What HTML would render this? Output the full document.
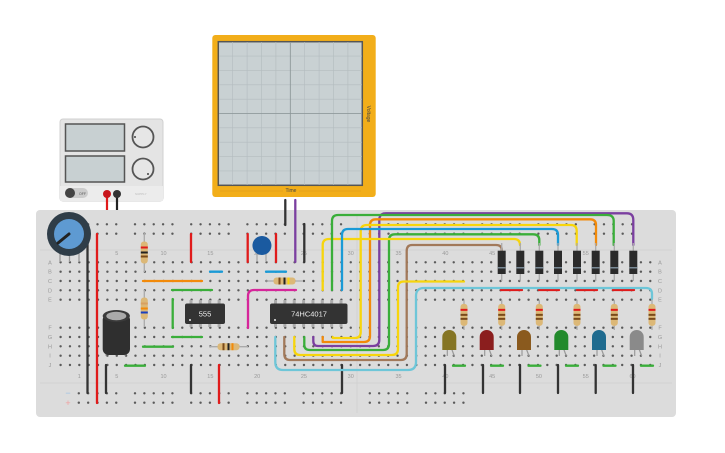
<!DOCTYPE html>
<html><head><meta charset="utf-8"><style>
html,body{margin:0;padding:0;background:#fff;width:725px;height:453px;overflow:hidden}
svg{display:block}
text{font-family:"Liberation Sans",sans-serif}
</style></head><body>
<svg id="s" width="725" height="453" viewBox="0 0 725 453" xmlns="http://www.w3.org/2000/svg">
<!-- power supply -->
<rect x="60" y="119" width="103" height="82" rx="3" fill="#e4e4e4" stroke="#d0d0d0"/>
<rect x="60" y="186" width="103" height="15" fill="#ececec"/>
<rect x="65.5" y="124" width="59" height="27" fill="#c8d0d2" stroke="#555" stroke-width="1.5"/>
<rect x="65.5" y="156" width="59" height="26" fill="#c8d0d2" stroke="#555" stroke-width="1.5"/>
<circle cx="143" cy="137" r="10.5" fill="#e6e6e6" stroke="#555" stroke-width="1.8"/>
<circle cx="143" cy="169" r="10.5" fill="#e6e6e6" stroke="#555" stroke-width="1.8"/>
<circle cx="135" cy="137" r="1" fill="#444"/><circle cx="148" cy="174" r="1" fill="#444"/>
<rect x="65" y="188" width="23" height="10" rx="5" fill="#ccc"/><circle cx="70" cy="193" r="5" fill="#444"/>
<text x="79" y="195" font-size="3.5" fill="#555">OFF</text>
<text x="135" y="195" font-size="3" fill="#bbb">SUPPLY</text>
<line x1="107" y1="194" x2="107" y2="234" stroke="#e01b1b" stroke-width="2.2"/>
<line x1="117" y1="194" x2="117" y2="225" stroke="#222" stroke-width="2.2"/>
<circle cx="107" cy="194" r="4" fill="#c8151b"/><circle cx="117" cy="194" r="4" fill="#333"/>
<!-- oscilloscope -->
<rect x="212.3" y="35" width="163.4" height="162" rx="3" fill="#f2ae1a"/>
<rect x="218.3" y="41.7" width="144" height="143.6" fill="#c9d1d3" stroke="#555" stroke-width="1.5"/>
<g id="grid" stroke="#b3bcbf" stroke-width="0.6"></g>
<line x1="290.3" y1="42" x2="290.3" y2="185" stroke="#8a9496" stroke-width="0.8"/>
<line x1="219" y1="113.5" x2="362" y2="113.5" stroke="#8a9496" stroke-width="0.8"/>
<text x="367" y="114" font-size="5" fill="#444" transform="rotate(90 367 114)" text-anchor="middle">Voltage</text>
<text x="291" y="192" font-size="5" fill="#444" text-anchor="middle">Time</text>
<line x1="220" y1="191" x2="283" y2="191" stroke="#d9961a" stroke-width="0.5"/><line x1="299" y1="191" x2="361" y2="191" stroke="#d9961a" stroke-width="0.5"/>
<!-- breadboard -->
<rect x="36" y="210" width="640" height="207" rx="4" fill="#dcdcdc"/>
<line x1="40" y1="250" x2="672" y2="250" stroke="#d2d2d2"/>
<line x1="40" y1="383" x2="672" y2="383" stroke="#d2d2d2"/>
<line x1="357" y1="214" x2="357" y2="413" stroke="#d2d2d2"/>
<g id="holes" fill="#5a5a5a"></g>
<g font-size="5.5" fill="#999" id="lbl"></g>
<text x="68" y="396" font-size="9" fill="#9bc3e6" text-anchor="middle">−</text>
<text x="68" y="406" font-size="9" fill="#f0a0a0" text-anchor="middle">+</text>
<!-- wires -->
<g fill="none" stroke-width="2.3" stroke-linejoin="round" stroke-linecap="round">
<path d="M87.5 240V393" stroke="#333"/>
<path d="M97 234V403" stroke="#e01b1b"/>
<path d="M191 234V262M247.7 234V262M276 234V262" stroke="#e01b1b"/>
<path d="M285.3 200V225" stroke="#333"/>
<path d="M295.3 200V262" stroke="#7b3fa0"/>
<path d="M304.3 224V262" stroke="#333"/>
<path d="M210 271.7H222M266 271.7H286" stroke="#1a9ad6"/>
<path d="M296 290H254Q248 290 248 296V328" stroke="#d6269a"/>
<path d="M143 281H202" stroke="#f28a0a"/>
<path d="M172 290H212M172.7 299V328M172 337H202M143 346.7H173M125 365.7H145" stroke="#3aae3a"/>
<path d="M106 365V393M191 365V393M342 365V393" stroke="#333"/>
<path d="M219 365V403" stroke="#e01b1b"/>
<path d="M445 365V393M483 365V393M520 365V393M558 365V393M595.7 365V393M633 365V393" stroke="#333"/>
<path d="M453 365.7H465M491 365.7H503M528.5 365.7H540.5M566 365.7H578M603.5 365.7H615.5M641 365.7H653" stroke="#3aae3a"/>
<path d="M501 290H522M539 290H559M577 290H597M613 290H634" stroke="#e01b1b"/>
<path d="M275.3 337V362Q275.3 370 283 370H408Q416 370 416 362V296Q416 288 424 288H646Q652 288 652 294V299" stroke="#6ec6d8"/>
<path d="M284.3 337V354Q284.3 360 290 360H401Q406.7 360 406.7 354V251Q406.7 245 412 245H496Q501.7 245 501.7 250V252" stroke="#a2795a"/>
<path d="M294.3 337V349Q294.3 355 300 355H392Q398 355 398 349V287Q398 281.5 404 281.5H464" stroke="#f7d50c"/>
<path d="M304.3 337V345Q304.3 350 310 350H383Q389 350 389 344V240Q389 234.3 395 234.3H533Q539.3 234.3 539.3 240V245" stroke="#3aae3a"/>
<path d="M313.3 337V341Q313.3 346 318 346H373Q379.3 346 379.3 340V220Q379.3 213.3 386 213.3H627Q633.3 213.3 633.3 220V245" stroke="#7b3fa0"/>
<path d="M322.7 337V342H364Q370 342 370 336V225Q370 219.3 376 219.3H590Q596 219.3 596 225V245" stroke="#f28a0a"/>
<path d="M332.7 337V338H355Q360.7 338 360.7 332V231Q360.7 225 367 225H571Q576.7 225 576.7 231V245" stroke="#f7d50c"/>
<path d="M322.7 290V245Q322.7 239 329 239H514Q520 239 520 245" stroke="#f7d50c"/>
<path d="M332 290V221Q332 215 338 215H607Q613.7 215 613.7 221V245" stroke="#3aae3a"/>
<path d="M342 290V235Q342 229 348 229H552Q558 229 558 235V245" stroke="#1a9ad6"/>
</g>
<!-- pot -->
<g stroke="#999" stroke-width="1.3"><line x1="60" y1="245" x2="60" y2="262"/><line x1="69.5" y1="245" x2="69.5" y2="262"/><line x1="79" y1="245" x2="79" y2="262"/></g>
<circle cx="69" cy="234" r="22" fill="#2f3d48"/>
<circle cx="69" cy="234" r="15" fill="#5e9ad2"/>
<line x1="69" y1="234" x2="58" y2="243" stroke="#222" stroke-width="3" stroke-linecap="round"/>
<!-- ceramic cap -->
<g stroke="#999" stroke-width="1"><line x1="257" y1="250" x2="257" y2="262"/><line x1="266" y1="250" x2="266" y2="262"/></g>
<path d="M262 236a9.5 9.5 0 1 1 -0.1 0Z" fill="#1a5aa0"/>
<!-- electrolytic -->
<g stroke="#999" stroke-width="1"><line x1="106" y1="350" x2="106" y2="356"/><line x1="125" y1="350" x2="125" y2="356"/></g>
<rect x="102.7" y="314" width="27.3" height="41" rx="6" fill="#2f2f2f"/>
<ellipse cx="116.3" cy="316" rx="13.6" ry="6" fill="#3a3a3a"/>
<ellipse cx="116.3" cy="316" rx="10" ry="4.3" fill="#aaa"/>
<g id="chips"></g>
<rect x="185" y="303.5" width="40" height="20.5" rx="2" fill="#333"/>
<text x="205" y="316.5" font-size="7.5" fill="#eee" text-anchor="middle" font-family="Liberation Mono">555</text>
<rect x="270" y="303.5" width="77.5" height="20.5" rx="2" fill="#333"/>
<text x="309" y="316.5" font-size="7.5" fill="#eee" text-anchor="middle" font-family="Liberation Mono">74HC4017</text>
<circle cx="190" cy="320" r="1" fill="#eee"/><circle cx="275" cy="320" r="1" fill="#eee"/>
<g id="parts"></g>
</svg>
<script>
var N="http://www.w3.org/2000/svg";
function el(t,a,p){var e=document.createElementNS(N,t);for(var k in a)e.setAttribute(k,a[k]);(p||document.getElementById('s')).appendChild(e);return e;}
var g=document.getElementById('grid');
for(var i=1;i<10;i++){var x=218.3+i*14.4,y=41.7+i*14.36;el('line',{x1:x,y1:42,x2:x,y2:185},g);el('line',{x1:219,y1:y,x2:362,y2:y},g);}
var h=document.getElementById('holes');
function hole(x,y){el('circle',{cx:x,cy:y,r:1.2},h);}
var rows=[262.3,271.7,281,290.3,299.7,327.7,337,346.3,355.7,365];
for(var c=0;c<64;c++){var x=60.6+c*9.36;rows.forEach(function(y){hole(x,y);});}
for(var k=0;k<10;k++)for(var j=0;j<5;j++){var x=78.8+k*56.2+j*9.36+(k>4?10:0);
 [224.3,233.7].forEach(function(y){hole(x,y);});
 if(k<7)[393.3,402.7].forEach(function(y){hole(x,y);});}
var L=document.getElementById('lbl');
function tx(x,y,s,a){var t=el('text',{x:x,y:y,'text-anchor':a||'middle'},L);t.textContent=s;}
"ABCDE".split("").forEach(function(s,i){tx(50,rows[i]+2,s);tx(660,rows[i]+2,s);});
"FGHIJ".split("").forEach(function(s,i){tx(50,rows[i+5]+2,s);tx(660,rows[i+5]+2,s);});
function cx(n){return 79.3+(n-1)*9.36+(n>30?1:0);}
[5,10,15,20,25,30,35,40,45,50,55,60].forEach(function(n){tx(cx(n),255,n);});
[1,5,10,15,20,25,30,35,40,45,50,55,60].forEach(function(n){tx(cx(n),378,n);});
var P=document.getElementById('parts');
var C=document.getElementById('chips');
function pins(x0,n,y){for(var i=0;i<n;i++)el('rect',{x:x0+i*9.36-1.5,y:y,width:3,height:4,fill:'#aaa'},C);}
pins(191,4,300);pins(191,4,323);pins(275.5,8,300);pins(275.5,8,323);
function resV(x,y1,y2,b1,b2,b3){el('line',{x1:x,y1:y1,x2:x,y2:y2,stroke:'#aaa','stroke-width':1.3},P);var m=(y1+y2)/2;
 el('rect',{x:x-3.5,y:m-11,width:7,height:22,rx:3,fill:'#dcb877'},P);
 el('rect',{x:x-3.5,y:m-6,width:7,height:2,fill:b1},P);el('rect',{x:x-3.5,y:m-1,width:7,height:2,fill:b2},P);el('rect',{x:x-3.5,y:m+3,width:7,height:2,fill:b3},P);}
function resH(x1,x2,y,b1,b2,b3){el('line',{x1:x1,y1:y,x2:x2,y2:y,stroke:'#aaa','stroke-width':1.3},P);var m=(x1+x2)/2;
 el('rect',{x:m-11,y:y-3.5,width:22,height:7,rx:3,fill:'#dcb877'},P);
 el('rect',{x:m-6,y:y-3.5,width:2,height:7,fill:b1},P);el('rect',{x:m-1,y:y-3.5,width:2,height:7,fill:b2},P);el('rect',{x:m+3,y:y-3.5,width:2,height:7,fill:b3},P);}
resV(144.3,233,272,'#e01b1b','#222','#7a4a1a');
resV(144.3,290,327,'#d8a060','#f28a0a','#1a40c0');
resH(266,303,281,'#7a4a1a','#222','#f7d50c');
resH(209,248,346.7,'#7a4a1a','#222','#f28a0a');
[464,501.7,539.3,577,614.3,652].forEach(function(x){resV(x,299.7,330,'#e01b1b','#7a4a1a','#7a4a1a');});
[501.7,520.3,539.3,558,577,595.7,614.3,633.3].forEach(function(x){el('line',{x1:x,y1:243,x2:x,y2:281,stroke:'#aaa','stroke-width':1.3},P);
 el('rect',{x:x-4,y:250.7,width:8,height:23.3,fill:'#2b2b2b'},P);el('rect',{x:x-4,y:267,width:8,height:1.5,fill:'#7a8a96'},P);});
var lc=['#857524','#8b1e1e','#8a5a1e','#228a2c','#1f6b8f','#8a8a8a'];
[449.3,486.7,524,561.3,599,636.7].forEach(function(x,i){el('path',{d:'M'+(x-2)+' 348V356M'+(x+2)+' 348L'+(x+5)+' 356',stroke:'#999','stroke-width':1.2,fill:'none'},P);
 el('path',{d:'M'+(x-7)+' 350V337a7 7 0 0 1 14 0V350Z',fill:lc[i]},P);});
</script>
</body></html>
